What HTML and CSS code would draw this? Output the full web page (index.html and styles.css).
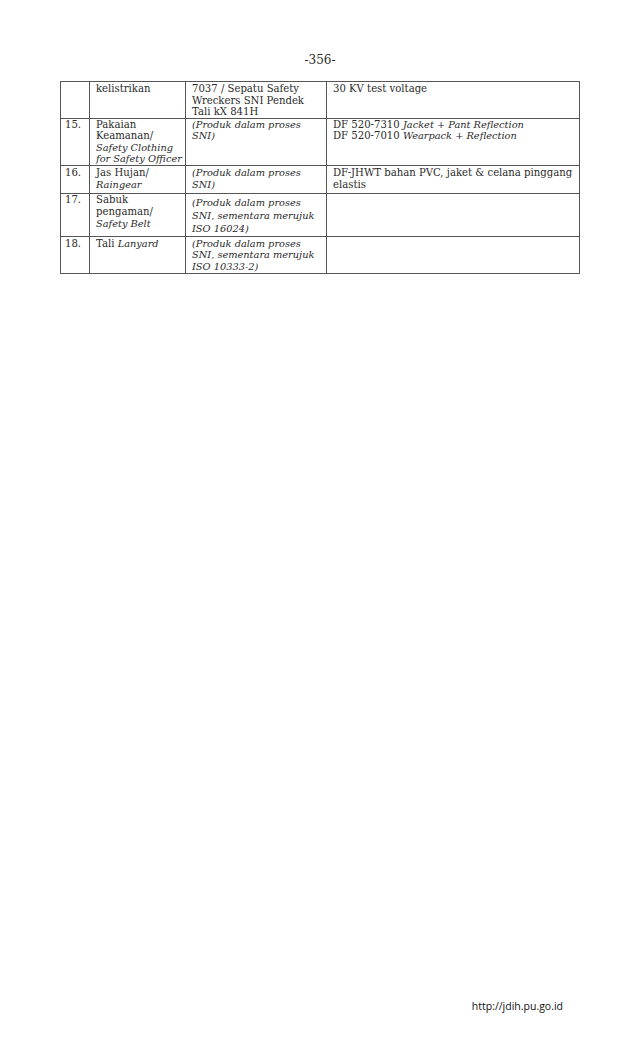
FILE: index.html
```html
<!DOCTYPE html>
<html>
<head>
<meta charset="utf-8">
<link rel="stylesheet" href="styles.css">
</head>
<body>
<div class="page">
  <div class="pagenum">-356-</div>
  <table class="spec">
    <colgroup>
      <col class="c1"><col class="c2"><col class="c3"><col class="c4">
    </colgroup>
    <tr class="r1">
      <td></td>
      <td>kelistrikan</td>
      <td>7037 / Sepatu Safety<br>Wreckers SNI Pendek<br>Tali kX 841H</td>
      <td>30 KV test voltage</td>
    </tr>
    <tr class="r2">
      <td>15.</td>
      <td>Pakaian<br>Keamanan/<br><i>Safety Clothing</i><br><i>for Safety Officer</i></td>
      <td><i>(Produk dalam proses</i><br><i>SNI)</i></td>
      <td>DF 520-7310 <i>Jacket + Pant Reflection</i><br>DF 520-7010 <i>Wearpack + Reflection</i></td>
    </tr>
    <tr class="r3">
      <td>16.</td>
      <td>Jas Hujan/<br><i>Raingear</i></td>
      <td><i>(Produk dalam proses</i><br><i>SNI)</i></td>
      <td>DF-JHWT bahan PVC, jaket &amp; celana pinggang<br>elastis</td>
    </tr>
    <tr class="r4">
      <td>17.</td>
      <td>Sabuk<br>pengaman/<br><i>Safety Belt</i></td>
      <td class="loose"><i>(Produk dalam proses</i><br><i>SNI, sementara merujuk</i><br><i>ISO 16024)</i></td>
      <td></td>
    </tr>
    <tr class="r5">
      <td>18.</td>
      <td>Tali <i>Lanyard</i></td>
      <td><i>(Produk dalam proses</i><br><i>SNI, sementara merujuk</i><br><i>ISO 10333-2)</i></td>
      <td></td>
    </tr>
  </table>
  <div class="spacer"></div>
  <div class="footer">http://jdih.pu.go.id</div>
</div>
</body>
</html>
```

FILE: styles.css
```css
html, body {
  margin: 0;
  padding: 0;
  background: #fff;
}
.page {
  width: 638px;
  height: 1051px;
  display: flex;
  flex-direction: column;
  font-family: "DejaVu Serif", "Liberation Serif", serif;
  color: #2a2a2a;
}
.pagenum {
  text-align: center;
  font-size: 12px;
  padding-top: 53px;
  height: 28px;
  line-height: 14px;
  box-sizing: content-box;
  margin-left: 2px;
}
.spec {
  margin-left: 60px;
  width: 519px;
  border-collapse: collapse;
  table-layout: fixed;
  font-size: 10.1px;
  line-height: 12px;
}
.spec i {
  font-size: 9.8px;
}
.c1 { width: 29px; }
.c2 { width: 96px; }
.c3 { width: 141px; }
.c4 { width: 253px; }
.spec td {
  border: 1px solid #555;
  vertical-align: top;
  padding: 1px 2px 0 6px;
  white-space: nowrap;
  overflow: hidden;
}
.spec td:first-child {
  padding-left: 4px;
  padding-right: 2px;
}
.r1 { height: 36px; }
.r2 { height: 47px; }
.r3 { height: 28px; }
.r4 { height: 43px; }
.r5 { height: 36px; }
.r1 td,
.r5 td {
  line-height: 11.6px;
}
.r2 td {
  line-height: 11.4px;
  padding-top: 0;
}
.r4 td {
  padding-top: 0;
}
.spec td.loose {
  line-height: 13.2px;
  padding-top: 2px;
}
.spacer { flex: 1; }
.footer {
  font-family: "Open Sans", "Liberation Sans", sans-serif;
  font-size: 10.5px;
  text-align: right;
  padding-right: 75px;
  height: 52px;
  color: #111;
}
```
